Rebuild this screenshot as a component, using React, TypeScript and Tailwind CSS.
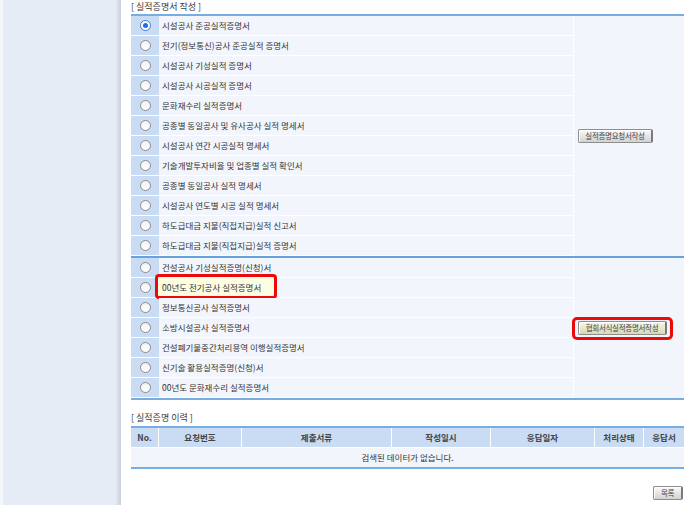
import React from "react";

const group1 = [
  "시설공사 준공실적증명서",
  "전기(정보통신)공사 준공실적 증명서",
  "시설공사 기성실적 증명서",
  "시설공사 시공실적 증명서",
  "문화재수리 실적증명서",
  "공종별 동일공사 및 유사공사 실적 명세서",
  "시설공사 연간 시공실적 명세서",
  "기술개발투자비율 및 업종별 실적 확인서",
  "공종별 동일공사 실적 명세서",
  "시설공사 연도별 시공 실적 명세서",
  "하도급대금 지불(직접지급)실적 신고서",
  "하도급대금 지불(직접지급)실적 증명서",
];

const group2 = [
  "건설공사 기성실적증명(신청)서",
  "00년도 전기공사 실적증명서",
  "정보통신공사 실적증명서",
  "소방시설공사 실적증명서",
  "건설폐기물중간처리용역 이행실적증명서",
  "신기술 활용실적증명(신청)서",
  "00년도 문화재수리 실적증명서",
];

function Radio({ checked }: { checked?: boolean }) {
  return checked ? (
    <span className="flex h-[11px] w-[11px] items-center justify-center rounded-full border border-[#3a7be0] bg-white">
      <span className="h-[5px] w-[5px] rounded-full bg-[#1b6fe6]" />
    </span>
  ) : (
    <span className="h-[11px] w-[11px] rounded-full border border-[#8c8c8c] bg-linear-to-b from-[#f2f2f2] to-white" />
  );
}

function Row({
  label,
  checked,
  highlight,
}: {
  label: string;
  checked?: boolean;
  highlight?: boolean;
}) {
  return (
    <div className="flex h-[20px] border-b border-white">
      <div className="flex w-[28px] shrink-0 items-center justify-center bg-[#c9dcf3]">
        <Radio checked={checked} />
      </div>
      <div className="relative flex flex-1 items-center bg-[#f2f6fc] pl-[3px]">
        {highlight && (
          <span className="absolute left-[-4px] top-[-4px] h-[25px] w-[122px] rounded-[4px] border-[3px] border-[#ea0a0a] bg-[#fdfde2]" />
        )}
        <span className="relative z-10">{label}</span>
      </div>
    </div>
  );
}

function GrayButton({ children, className = "" }: { children: React.ReactNode; className?: string }) {
  return (
    <span
      className={
        "flex h-[14px] items-center justify-center rounded-[2px] border border-[#8e8e8e] border-r-[2px] border-r-[#7a7a7a] text-[7.5px] leading-none tracking-[-0.3px] text-[#444] shadow-[inset_1px_1px_0_#ffffff] " +
        className
      }
    >
      {children}
    </span>
  );
}

export default function App() {
  return (
    <div className="flex min-h-[505px] w-full bg-white text-[8.5px] text-[#333] [font-family:'Noto_Sans_CJK_KR','Noto_Sans',sans-serif]">
      <aside className="flex w-[121px] shrink-0">
        <div className="w-[3px] bg-[#f4f6fa]" />
        <div className="flex-1 bg-[#e6ecf5]" />
        <div className="w-[5px] bg-linear-to-r from-[#e2e8f1] to-[#c8d0dc]" />
      </aside>

      <main className="flex-1 pl-[10px] pr-[7px]">
        <div className="h-[14px] text-[9px] leading-[13px] text-[#3a3a3a]">[ 실적증명서 작성 ]</div>

        <div className="border-t-2 border-[#78ade2]">
          <div className="flex">
            <div className="flex-1">
              {group1.map((l, i) => (
                <Row key={l} label={l} checked={i === 0} />
              ))}
            </div>
            <div className="flex w-[111px] items-center border-l border-white bg-[#f2f6fc] pl-[4px]">
              <GrayButton className="w-[75px] bg-linear-to-b from-[#fafafa] to-[#d2d2d2]">
                실적증명요청서작성
              </GrayButton>
            </div>
          </div>

          <div className="flex border-t-2 border-[#68a2dc]">
            <div className="flex-1">
              {group2.map((l, i) => (
                <Row key={l} label={l} highlight={i === 1} />
              ))}
            </div>
            <div className="flex w-[111px] items-center border-l border-white bg-[#f2f6fc] pl-[4px]">
              <span className="relative">
                <span className="absolute left-[-6px] right-[-6px] top-[-4px] bottom-[-5px] rounded-[5px] border-[3px] border-[#ea0a0a]" />
                <GrayButton className="relative w-[89px] bg-linear-to-b from-[#f7f7e4] to-[#d9d9b6]">
                  협회서식실적증명서작성
                </GrayButton>
              </span>
            </div>
          </div>
          <div className="border-t-2 border-[#78ade2]" />
        </div>

        <div className="mt-[11px] h-[15px] text-[9px] leading-[14px] text-[#3a3a3a]">[ 실적증명 이력 ]</div>
        <div className="border-t-2 border-[#78ade2]">
          <div className="flex h-[19px] bg-[#c9dcf3] font-bold text-[#444]">
            {[
              ["No.", "w-[27px]"],
              ["요청번호", "w-[83px]"],
              ["제출서류", "w-[150px]"],
              ["작성일시", "w-[99px]"],
              ["응답일자", "w-[104px]"],
              ["처리상태", "w-[49px]"],
              ["응답서", "flex-1"],
            ].map(([t, w], i) => (
              <div
                key={t}
                className={
                  "flex items-center justify-center " + w + (i > 0 ? " border-l border-white" : "")
                }
              >
                {t}
              </div>
            ))}
          </div>
          <div className="flex h-[20px] items-center justify-center border-t border-white bg-[#f2f6fc]">
            검색된 데이터가 없습니다.
          </div>
          <div className="border-t-2 border-[#78ade2]" />
        </div>

        <div className="mt-[17px] flex justify-end pr-[1px]">
          <GrayButton className="w-[30px] bg-linear-to-b from-[#fafafa] to-[#d2d2d2]">목록</GrayButton>
        </div>
      </main>
    </div>
  );
}
